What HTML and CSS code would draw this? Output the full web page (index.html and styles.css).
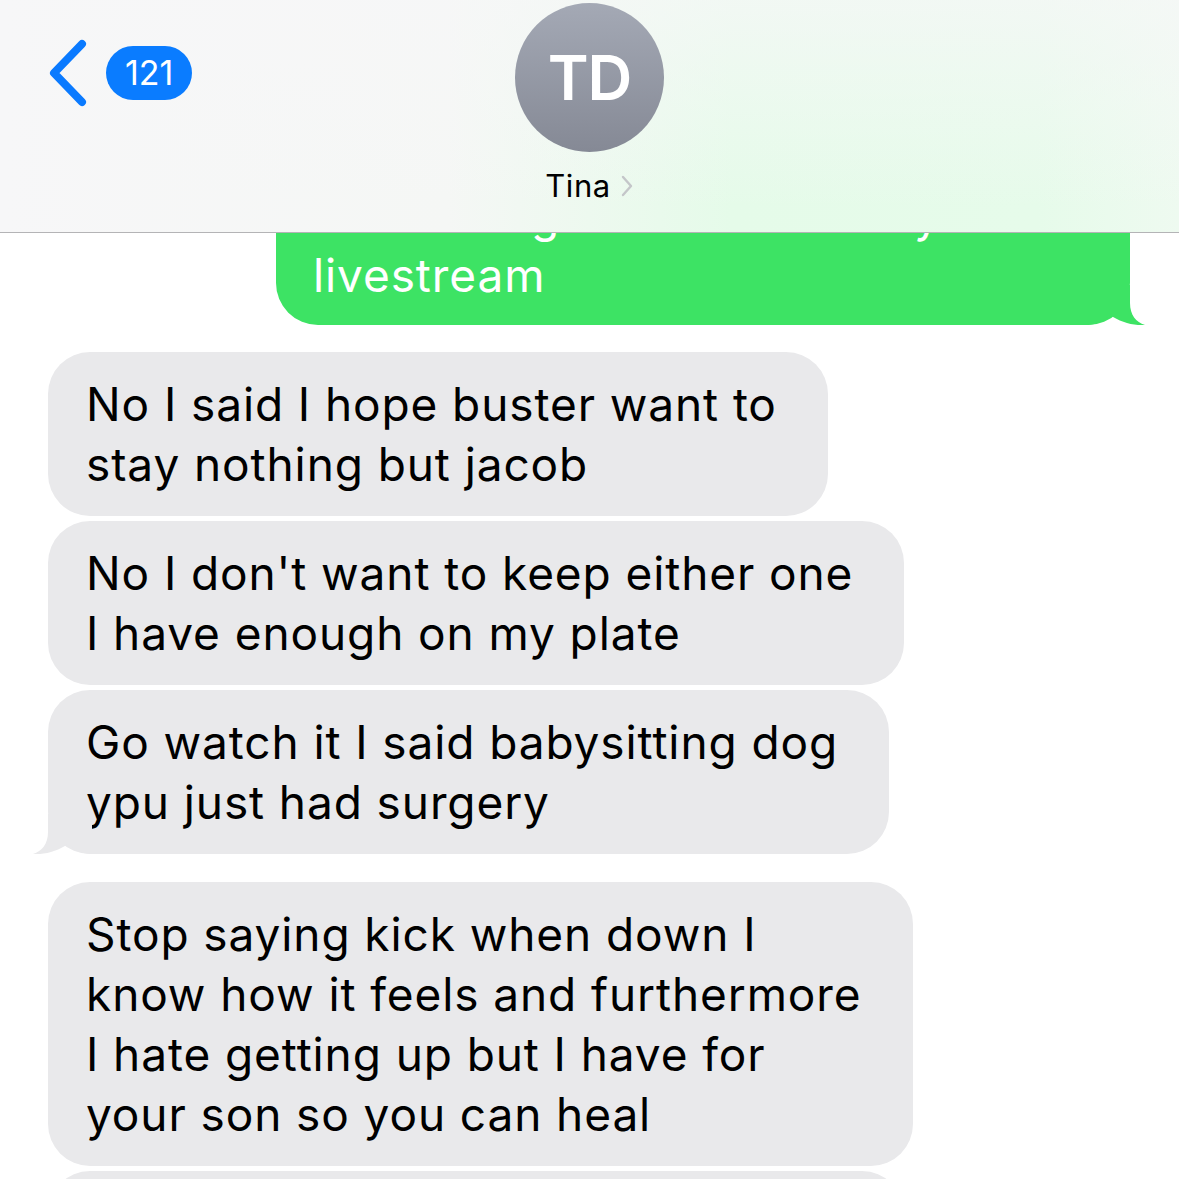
FILE: index.html
```html
<!DOCTYPE html>
<html lang="en">
<head>
    <meta charset="UTF-8">
    <meta name="viewport" content="width=device-width, initial-scale=1.0">
    <title>Tina</title>
    <link rel="stylesheet" href="styles.css">
</head>
<body>
    <header class="nav">
        <div class="nav-left">
            <svg class="back" width="44" height="70" viewBox="0 0 44 70">
                <polyline points="35,6 7,35 35,64" fill="none" stroke="#0a7aff" stroke-width="8" stroke-linecap="round" stroke-linejoin="round"/>
            </svg>
            <span class="badge">121</span>
        </div>
        <div class="contact">
            <div class="avatar">TD</div>
            <div class="name">
                <span>Tina</span>
                <svg class="name-chevron" width="14" height="22" viewBox="0 0 14 22">
                    <polyline points="3,2 11,11 3,20" fill="none" stroke="#c4c6c9" stroke-width="2.4" stroke-linecap="round" stroke-linejoin="round"/>
                </svg>
            </div>
        </div>
        <div></div>
    </header>

    <main class="thread">
        <div class="bubble sent">
            <div class="line">I said tonight is the birthday</div>
            <div class="line">livestream</div>
            <svg class="tail-shape" width="60" height="40" viewBox="0 0 60 40">
                <path d="M16 0 L16 18 C16 30 10 37 1 40 C12 41 26 37 36 30 C42 36 50 40 60 40 L60 0 Z" fill="#3de364"/>
            </svg>
        </div>

        <div class="group">
            <div class="bubble received">No I said I hope buster want to<br>stay nothing but jacob</div>
            <div class="bubble received">No I don't want to keep either one<br>I have enough on my plate</div>
            <div class="bubble received">
                Go watch it I said babysitting dog<br>ypu just had surgery
                <svg class="tail-shape" width="60" height="40" viewBox="0 0 60 40">
                    <path d="M16 0 L16 18 C16 30 10 37 1 40 C12 41 26 37 36 30 C42 36 50 40 60 40 L60 0 Z" fill="#e9e9eb"/>
                </svg>
            </div>
        </div>

        <div class="group">
            <div class="bubble received">Stop saying kick when down I<br>know how it feels and furthermore<br>I hate getting up but I have for<br>your son so you can heal</div>
            <div class="bubble received">Just rest and let me take the dogs</div>
        </div>
    </main>
</body>
</html>
```

FILE: styles.css
```css
body {
    margin: 0;
    background-color: #ffffff;
    font-family: Inter, "Noto Sans", sans-serif;
    color: #000000;
    overflow: hidden;
}

.nav {
    position: fixed;
    top: 0;
    left: 0;
    right: 0;
    height: 232px;
    display: grid;
    grid-template-columns: 1fr auto 1fr;
    border-bottom: 1px solid #b4b4b6;
    background:
        linear-gradient(to bottom, rgba(247, 247, 248, 0.7), rgba(247, 247, 248, 0) 90%),
        linear-gradient(to right, #f7f7f8 0%, #f5f7f5 38%, #e5fbe9 62%, #e6fbea 88%, #eefaf0 100%);
    z-index: 2;
}

.nav-left {
    display: flex;
    align-items: center;
    align-self: start;
    gap: 15px;
    padding: 38px 0 0 47px;
}

.badge {
    display: inline-block;
    background-color: #0a7cff;
    color: white;
    font-size: 34px;
    line-height: 54px;
    height: 54px;
    padding: 0 19px;
    border-radius: 27px;
}

.contact {
    display: flex;
    flex-direction: column;
    align-items: center;
    padding-top: 3px;
}

.avatar {
    width: 149px;
    height: 149px;
    border-radius: 50%;
    background: linear-gradient(to bottom, #a4a9b5, #858995);
    color: white;
    font-size: 62px;
    font-weight: 600;
    letter-spacing: -1px;
    display: flex;
    align-items: center;
    justify-content: center;
}

.name {
    display: flex;
    align-items: center;
    gap: 9px;
    margin-top: 16px;
    font-size: 31px;
    letter-spacing: 0.6px;
    line-height: 36px;
}

.thread {
    display: flex;
    flex-direction: column;
    padding: 165px 49px 0 48px;
}

.group {
    display: flex;
    flex-direction: column;
    align-items: flex-start;
    gap: 5px;
    margin-top: 27px;
}

.group + .group {
    margin-top: 28px;
}

.bubble {
    position: relative;
    font-size: 46px;
    letter-spacing: 0.9px;
    line-height: 60px;
    padding: 22px 51px 22px 38px;
    border-radius: 42px;
}

.received {
    background-color: #e9e9eb;
}

.sent {
    align-self: flex-end;
    box-sizing: border-box;
    width: 854px;
    background-color: #3de364;
    color: white;
    padding: 20px 40px 20px 37px;
}

.sent .line {
    white-space: nowrap;
    overflow: hidden;
}

.tail-shape {
    position: absolute;
    bottom: 0;
}

.received .tail-shape {
    left: -16px;
}

.sent .tail-shape {
    right: -16px;
    transform: scaleX(-1);
}
```
